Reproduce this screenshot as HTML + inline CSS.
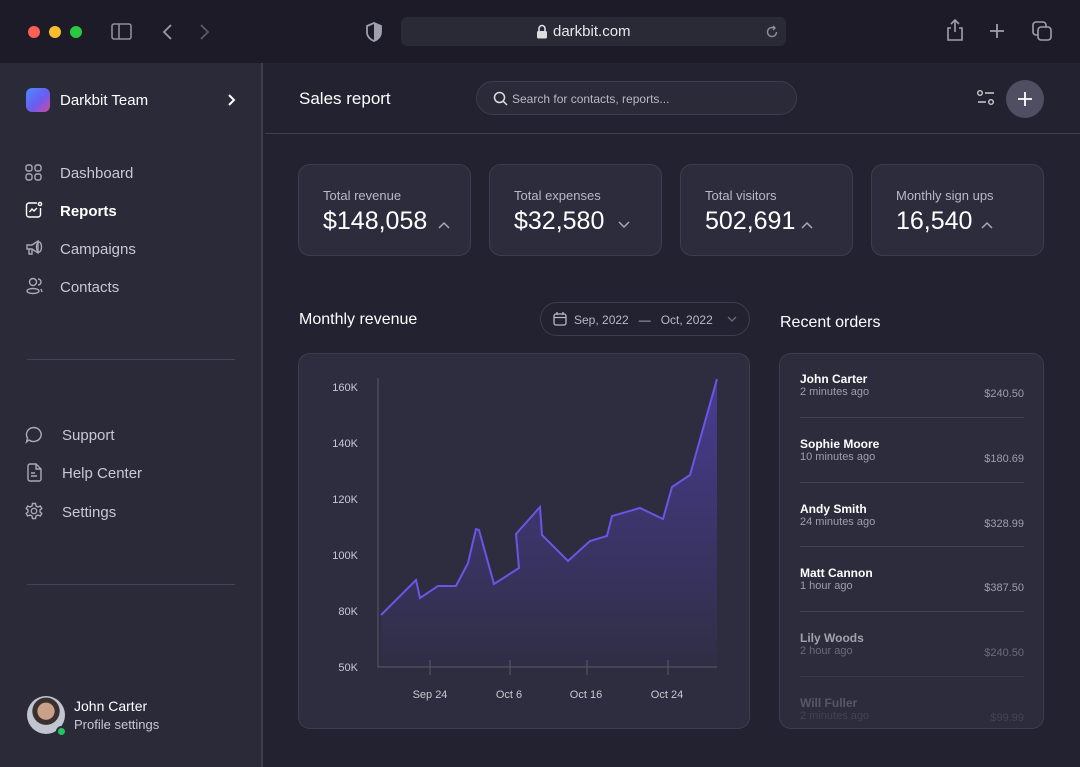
<!DOCTYPE html>
<html><head><meta charset="utf-8"><style>
*{box-sizing:border-box;margin:0;padding:0}
body{width:1080px;height:767px;overflow:hidden;background:#232230;font-family:"Liberation Sans",sans-serif;color:#fff;position:relative}
.a{position:absolute}
.top{left:0;top:0;width:1080px;height:63px;background:#1c1b27}
.side{left:0;top:63px;width:263px;height:704px;background:#2b2a38;border-right:2px solid #3e3d4c}
.nav{font-size:15px;color:#c9c8d3}
.card{background:#2d2c3c;border:1px solid #3e3d4e;border-radius:12px}
.lbl{font-size:13px;color:#b9b8c6}
.val{font-size:25px;color:#fff}
.ord .n{font-size:12px;font-weight:bold;color:#fff}
.ord .t{font-size:11px;color:#9f9eae}
.ord .p{font-size:11px;color:#9f9eae;position:absolute;right:20px}
.hr{height:1px;background:#434252}
svg{position:absolute}
</style></head><body>
<div class="a top"></div>
<div class="a" style="left:28px;top:26px;width:12px;height:12px;border-radius:50%;background:#fe5f57"></div>
<div class="a" style="left:49px;top:26px;width:12px;height:12px;border-radius:50%;background:#febc2e"></div>
<div class="a" style="left:70px;top:26px;width:12px;height:12px;border-radius:50%;background:#28c840"></div>
<svg style="left:110px;top:22px" width="24" height="20" viewBox="0 0 24 20" fill="none" stroke="#8f8e9c" stroke-width="1.6"><rect x="2" y="2" width="19" height="15" rx="2"/><line x1="9" y1="2" x2="9" y2="17"/></svg>
<svg style="left:158px;top:22px" width="20" height="20" fill="none" stroke="#9a99a6" stroke-width="1.8"><path d="M13 3 L6 10 L13 17"/></svg>
<svg style="left:194px;top:22px" width="20" height="20" fill="none" stroke="#5a5968" stroke-width="1.8"><path d="M7 3 L14 10 L7 17"/></svg>
<svg style="left:364px;top:21px" width="20" height="22" viewBox="0 0 20 22"><path d="M10 2 L17 5 V11 C17 16 13 19 10 20 C7 19 3 16 3 11 V5 Z" fill="none" stroke="#a09fad" stroke-width="1.8"/><path d="M10 2 L17 5 V11 C17 16 13 19 10 20Z" fill="#a09fad"/></svg>
<div class="a" style="left:401px;top:17px;width:385px;height:29px;background:#2a2936;border-radius:6px"></div>
<svg style="left:536px;top:24px" width="12" height="15" viewBox="0 0 12 15"><path d="M3 7 V4.5 a3 3 0 0 1 6 0 V7" fill="none" stroke="#ddd" stroke-width="1.6"/><rect x="1" y="7" width="10" height="7.5" rx="1.5" fill="#ddd"/></svg>
<div class="a" style="left:553px;top:23px;font-size:15px;color:#e8e8ee">darkbit.com</div>
<svg style="left:765px;top:25px" width="14" height="14" fill="none" stroke="#8f8e9c" stroke-width="1.4"><path d="M11.5 7 A4.5 4.5 0 1 1 9 3"/><path d="M8 1 L10 3 L8 5"/></svg>
<svg style="left:944px;top:18px" width="22" height="24" fill="none" stroke="#a09fad" stroke-width="1.6"><path d="M11 2 V14 M7 6 L11 2 L15 6 M7 10 H4 V22 H18 V10 H15"/></svg>
<svg style="left:988px;top:22px" width="18" height="18" stroke="#a09fad" stroke-width="1.8"><path d="M9 2 V16 M2 9 H16"/></svg>
<svg style="left:1031px;top:20px" width="22" height="22" fill="none" stroke="#a09fad" stroke-width="1.6"><rect x="2" y="2" width="13" height="13" rx="3"/><rect x="7" y="7" width="13" height="13" rx="3" fill="#1c1b27"/></svg>

<div class="a side"></div>
<div class="a" style="left:26px;top:88px;width:24px;height:24px;border-radius:6px;background:linear-gradient(135deg,#4a8cff,#6a5cf0 55%,#d04aa0)"></div>
<div class="a" style="left:60px;top:92px;font-size:15px">Darkbit Team</div>
<svg style="left:226px;top:93px" width="12" height="14" fill="none" stroke="#fff" stroke-width="2"><path d="M3 2 L8 7 L3 12"/></svg>
<svg style="left:25px;top:164px" width="18" height="18" fill="none" stroke="#aaa9b6" stroke-width="1.4"><rect x="1" y="1" width="6" height="6" rx="2"/><rect x="10" y="1" width="6" height="6" rx="2"/><rect x="1" y="10" width="6" height="6" rx="2"/><rect x="10" y="10" width="6" height="6" rx="2"/></svg>
<div class="a nav" style="left:60px;top:165px">Dashboard</div>
<svg style="left:25px;top:201px" width="18" height="18" fill="none" stroke="#fff" stroke-width="1.4"><path d="M12 2 H4 A2.5 2.5 0 0 0 1.5 4.5 V13.5 A2.5 2.5 0 0 0 4 16 H13 A2.5 2.5 0 0 0 15.5 13.5 V7"/><circle cx="15" cy="3" r="1.6"/><path d="M4.5 11 L7 8 L9 10 L12 7"/></svg>
<div class="a nav" style="left:60px;top:203px;color:#fff;font-weight:bold">Reports</div>
<svg style="left:25px;top:239px" width="20" height="18" fill="none" stroke="#aaa9b6" stroke-width="1.4"><path d="M2 6 H7 L13 2 V14 L7 10 H2 Z"/><path d="M4 10 V15 H7 V10"/><ellipse cx="14" cy="8" rx="2.5" ry="5"/></svg>
<div class="a nav" style="left:60px;top:241px">Campaigns</div>
<svg style="left:25px;top:277px" width="20" height="18" fill="none" stroke="#aaa9b6" stroke-width="1.4"><circle cx="8" cy="5" r="3.5"/><ellipse cx="8" cy="14" rx="6" ry="2.5"/><path d="M13 2 A3 3 0 0 1 13 8 M16 12 L17 15"/></svg>
<div class="a nav" style="left:60px;top:279px">Contacts</div>
<div class="a" style="left:27px;top:359px;width:208px;height:1px;background:#444353"></div>
<svg style="left:25px;top:426px" width="18" height="18" fill="none" stroke="#aaa9b6" stroke-width="1.4"><path d="M9 1.5 A7.5 7 0 1 1 4 14 L1.5 16 L2.5 12 A7.5 7 0 0 1 9 1.5Z"/></svg>
<div class="a nav" style="left:62px;top:427px">Support</div>
<svg style="left:26px;top:463px" width="16" height="19" fill="none" stroke="#aaa9b6" stroke-width="1.4"><path d="M2 3 A2 2 0 0 1 4 1 H10 L15 6 V16 A2 2 0 0 1 13 18 H4 A2 2 0 0 1 2 16 Z M10 1 V6 H15 M5 10 H9 M5 13 H11"/></svg>
<div class="a nav" style="left:62px;top:465px">Help Center</div>
<svg style="left:25px;top:502px" width="18" height="18" fill="none" stroke="#aaa9b6" stroke-width="1.4"><circle cx="9" cy="9" r="2.7"/><path d="M7.5 1.5 H10.5 L11 4 L13 5 L15.3 4 L16.8 6.6 L15 8 V10 L16.8 11.4 L15.3 14 L13 13 L11 14 L10.5 16.5 H7.5 L7 14 L5 13 L2.7 14 L1.2 11.4 L3 10 V8 L1.2 6.6 L2.7 4 L5 5 L7 4 Z"/></svg>
<div class="a nav" style="left:62px;top:504px">Settings</div>
<div class="a" style="left:27px;top:584px;width:208px;height:1px;background:#444353"></div>
<div class="a" style="left:27px;top:696px;width:38px;height:38px;border-radius:50%;background:radial-gradient(circle at 50% 40%,#c9a088 0 28%,#3a3030 30% 45%,#bfc6d0 47%)"></div>
<div class="a" style="left:56px;top:726px;width:11px;height:11px;border-radius:50%;background:#22c55e;border:2px solid #2b2a38"></div>
<div class="a" style="left:74px;top:698px;font-size:14px">John Carter</div>
<div class="a" style="left:74px;top:717px;font-size:13px;color:#c9c8d3">Profile settings</div>

<div class="a" style="left:265px;top:133px;width:815px;height:1px;background:#3e3d4c"></div>
<div class="a" style="left:299px;top:89px;font-size:17px">Sales report</div>
<div class="a" style="left:476px;top:81px;width:321px;height:34px;border-radius:17px;background:#2b2a38;border:1px solid #3e3d4e"></div>
<svg style="left:493px;top:91px" width="15" height="15" fill="none" stroke="#ddd" stroke-width="1.5"><circle cx="6.5" cy="6.5" r="5"/><path d="M10 10 L14 14"/></svg>
<div class="a" style="left:512px;top:92px;font-size:12px;color:#b9b8c6">Search for contacts, reports...</div>
<svg style="left:976px;top:89px" width="20" height="18" fill="none" stroke="#ccc" stroke-width="1.4"><circle cx="4" cy="4" r="2.3"/><path d="M9 4 H18 M2 13 H10"/><circle cx="15" cy="13" r="2.3"/></svg>
<div class="a" style="left:1006px;top:80px;width:38px;height:38px;border-radius:50%;background:#4f4e62"></div>
<svg style="left:1016px;top:90px" width="18" height="18" stroke="#fff" stroke-width="1.8"><path d="M9 2 V16 M2 9 H16"/></svg>

<div class="a card" style="left:298px;top:164px;width:173px;height:92px"></div>
<div class="a card" style="left:489px;top:164px;width:173px;height:92px"></div>
<div class="a card" style="left:680px;top:164px;width:173px;height:92px"></div>
<div class="a card" style="left:871px;top:164px;width:173px;height:92px"></div>
<div class="a lbl" style="left:323px;top:188px">Total revenue</div>
<div class="a val" style="left:323px;top:207px">$148,058</div>
<div class="a lbl" style="left:514px;top:188px">Total expenses</div>
<div class="a val" style="left:514px;top:207px">$32,580</div>
<div class="a lbl" style="left:705px;top:188px">Total visitors</div>
<div class="a val" style="left:705px;top:207px">502,691</div>
<div class="a lbl" style="left:896px;top:188px">Monthly sign ups</div>
<div class="a val" style="left:896px;top:207px">16,540</div>
<svg style="left:437px;top:220px" width="14" height="10" fill="none" stroke="#aaa9b6" stroke-width="1.5"><path d="M2 8 L7 3 L12 8"/></svg>
<svg style="left:617px;top:220px" width="14" height="10" fill="none" stroke="#aaa9b6" stroke-width="1.5"><path d="M2 2 L7 7 L12 2"/></svg>
<svg style="left:800px;top:220px" width="14" height="10" fill="none" stroke="#aaa9b6" stroke-width="1.5"><path d="M2 8 L7 3 L12 8"/></svg>
<svg style="left:980px;top:220px" width="14" height="10" fill="none" stroke="#aaa9b6" stroke-width="1.5"><path d="M2 8 L7 3 L12 8"/></svg>

<div class="a" style="left:299px;top:311px;font-size:16px">Monthly revenue</div>
<div class="a" style="left:540px;top:302px;width:210px;height:34px;border-radius:17px;border:1px solid #3e3d4e"></div>
<svg style="left:552px;top:311px" width="16" height="16" fill="none" stroke="#b9b8c6" stroke-width="1.3"><rect x="2" y="3" width="12" height="11" rx="2"/><path d="M2 6.5 H14 M5 1 V4 M11 1 V4"/></svg>
<div class="a" style="left:574px;top:313px;font-size:12px;color:#b9b8c6">Sep, 2022 &nbsp;&nbsp;—&nbsp;&nbsp; Oct, 2022</div>
<svg style="left:726px;top:314px" width="12" height="10" fill="none" stroke="#6f6e7e" stroke-width="1.3"><path d="M2 3 L6 7 L10 3"/></svg>

<div class="a card" style="left:298px;top:353px;width:452px;height:376px;background:#2e2d3f"></div>
<svg style="left:0;top:0" width="1080" height="767">
<defs><linearGradient id="g" x1="0" y1="0" x2="0" y2="1"><stop offset="0" stop-color="#5a45c8" stop-opacity=".6"/><stop offset="1" stop-color="#5a45c8" stop-opacity=".04"/></linearGradient></defs>
<path d="M381 615 L416 580 L420 598 L438 586 L456 586 L468 563 L476 529 L479 530 L494 584 L519 568 L516 534 L540 507 L542 535 L568 561 L590 541 L607 536 L612 516 L640 508 L663 519 L672 487 L690 475 L717 379 L717 667 L381 667Z" fill="url(#g)"/>
<path d="M381 615 L416 580 L420 598 L438 586 L456 586 L468 563 L476 529 L479 530 L494 584 L519 568 L516 534 L540 507 L542 535 L568 561 L590 541 L607 536 L612 516 L640 508 L663 519 L672 487 L690 475 L717 379" fill="none" stroke="#6a55e6" stroke-width="2"/>
<path d="M378 378 V667 H717" fill="none" stroke="#5a596a" stroke-width="1"/>
<path d="M430 660 V675 M510 660 V675 M587 660 V675 M668 660 V675" stroke="#5a596a"/>
<g font-family="Liberation Sans" font-size="11" fill="#c9c8d3" text-anchor="end"><text x="358" y="391">160K</text><text x="358" y="447">140K</text><text x="358" y="503">120K</text><text x="358" y="559">100K</text><text x="358" y="615">80K</text><text x="358" y="671">50K</text></g>
<g font-family="Liberation Sans" font-size="11" fill="#c9c8d3" text-anchor="middle"><text x="430" y="698">Sep 24</text><text x="509" y="698">Oct 6</text><text x="586" y="698">Oct 16</text><text x="667" y="698">Oct 24</text></g>
</svg>

<div class="a" style="left:780px;top:314px;font-size:16px">Recent orders</div>
<div class="a card ord" style="left:779px;top:353px;width:265px;height:376px;overflow:hidden;background:#2d2c3c">
<div class="a" style="left:20px;top:18px;width:224px;height:60px"><div class="n">John Carter</div><div class="t">2 minutes ago</div><div class="p" style="right:0;top:16px">$240.50</div></div>
<div class="a hr" style="left:20px;top:63px;width:224px"></div>
<div class="a" style="left:20px;top:83px;width:224px;height:60px"><div class="n">Sophie Moore</div><div class="t">10 minutes ago</div><div class="p" style="right:0;top:16px">$180.69</div></div>
<div class="a hr" style="left:20px;top:128px;width:224px"></div>
<div class="a" style="left:20px;top:148px;width:224px;height:60px"><div class="n">Andy Smith</div><div class="t">24 minutes ago</div><div class="p" style="right:0;top:16px">$328.99</div></div>
<div class="a hr" style="left:20px;top:192px;width:224px"></div>
<div class="a" style="left:20px;top:212px;width:224px;height:60px"><div class="n">Matt Cannon</div><div class="t">1 hour ago</div><div class="p" style="right:0;top:16px">$387.50</div></div>
<div class="a hr" style="left:20px;top:257px;width:224px"></div>
<div class="a" style="left:20px;top:277px;width:224px;height:60px;opacity:.55"><div class="n">Lily Woods</div><div class="t">2 hour ago</div><div class="p" style="right:0;top:16px">$240.50</div></div>
<div class="a hr" style="left:20px;top:322px;width:224px;opacity:.6"></div>
<div class="a" style="left:20px;top:342px;width:224px;height:60px;opacity:.2"><div class="n">Will Fuller</div><div class="t">2 minutes ago</div><div class="p" style="right:0;top:16px">$99.99</div></div>
</div>
</body></html>
